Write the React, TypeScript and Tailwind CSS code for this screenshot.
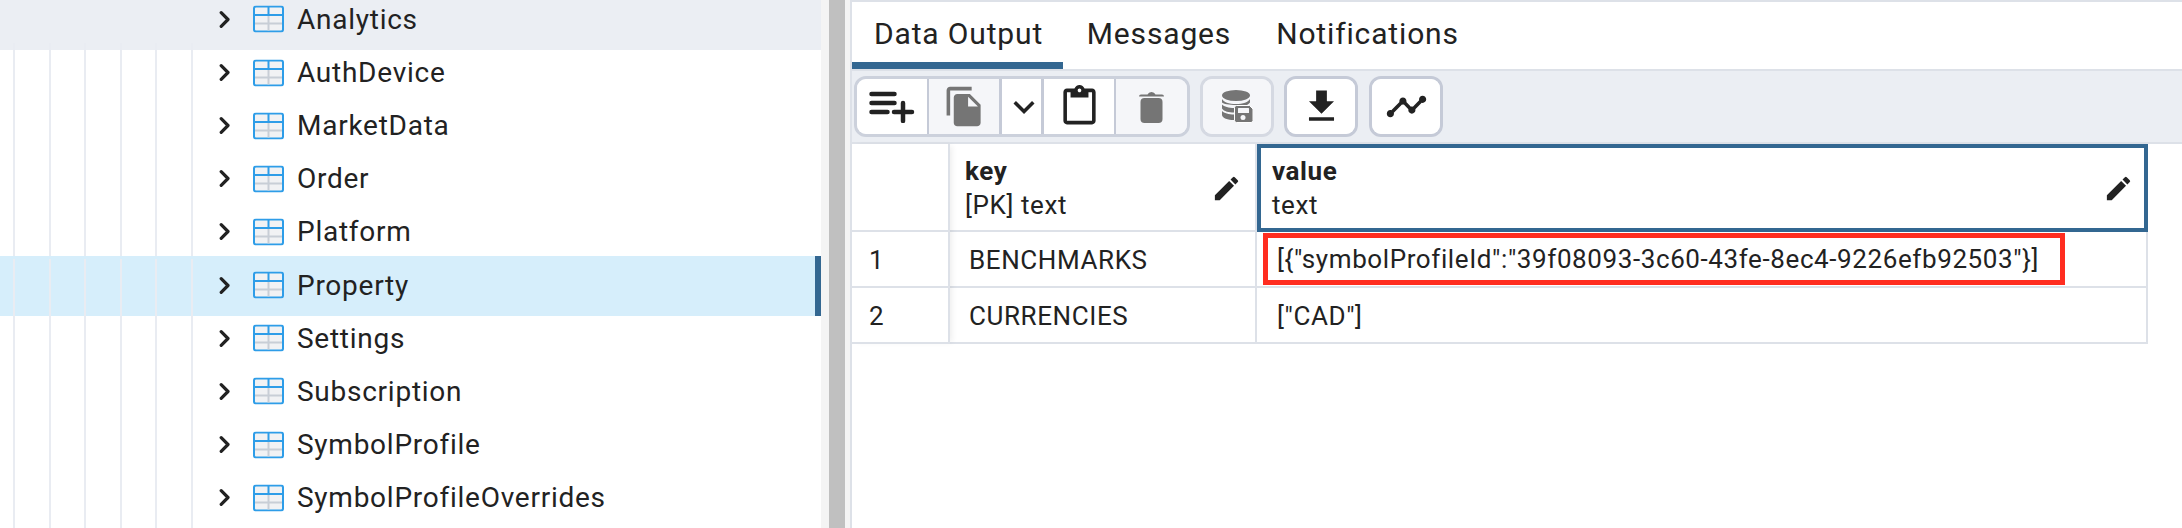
import { MdEdit, MdFileCopy, MdKeyboardArrowDown, MdContentPaste, MdFileDownload, MdTimeline } from "react-icons/md";
import type { ReactNode } from "react";

const tables = ["Analytics", "AuthDevice", "MarketData", "Order", "Platform", "Property", "Settings", "Subscription", "SymbolProfile", "SymbolProfileOverrides"];

function TableIcon() {
  return (
    <svg width="31" height="27" viewBox="0 0 31 27" className="shrink-0">
      <rect x="1" y="1" width="29" height="25" rx="2" fill="#f1f2f4" stroke="#2e9de8" strokeWidth="2" />
      <path d="M2 18h27M15.5 10v15" stroke="#c8ced6" strokeWidth="2" fill="none" />
      <path d="M1 9.500h29M15.500 1v9" stroke="#2e9de8" strokeWidth="2" fill="none" />
    </svg>
  );
}

function Chevron() {
  return (
    <svg width="12" height="18" viewBox="0 0 12 18" className="shrink-0">
      <path d="M2.200 2.200 9 9l-6.800 6.800" fill="none" stroke="#222" strokeWidth="3.200" strokeLinecap="round" strokeLinejoin="round" />
    </svg>
  );
}

function TreeRow({ name, index }: { name: string; index: number }) {
  const selected = name === "Property";
  const hover = index === 0;
  return (
    <div
      className={`relative flex items-center h-[60px] pl-[13px] ${index === 0 ? "-mt-[10px]" : "-mt-[6.670px]"} ${selected ? "bg-[#d6eefb] border-r-[6px] border-[#336791]" : ""} ${hover ? "bg-[#ebeef3]" : ""}`}
    >
      {[0, 1, 2, 3, 4, 5].map((g) => (
        <span
          key={g}
          className={`w-[2px] shrink-0 self-stretch ${g > 0 ? "ml-[33.600px]" : ""} ${hover ? "" : "bg-[#e9ecf2]"} ${selected ? "mt-[3px]" : ""}`}
        />
      ))}
      <span className="ml-[26px] flex -translate-y-[0.500px]"><Chevron /></span>
      <span className="ml-[22px] flex -translate-y-[0.500px]"><TableIcon /></span>
      <span className="ml-[13px] text-[28px] leading-[32px] text-[#222] tracking-[0.750px] -translate-y-[0.500px]">{name}</span>
    </div>
  );
}

function ToolBtn({ children, enabled, w = "w-[73px]", cls = "" }: { children: ReactNode; enabled?: boolean; w?: string; cls?: string }) {
  return (
    <div className={`${w} h-full flex items-center justify-center ${enabled ? "bg-white text-[#222]" : "bg-[#f5f6f9] text-[#757575]"} ${cls}`}>
      {children}
    </div>
  );
}

function AddRowIcon() {
  return (
    <svg width="46" height="32" viewBox="0 0 46 32" fill="none" stroke="#222" strokeWidth="4.500" strokeLinecap="round">
      <path d="M2.500 3h23M2.500 12h23M2.500 21h16M25 21h18M34 12v18" />
    </svg>
  );
}

function TrashIcon() {
  return (
    <svg width="25" height="32" viewBox="0 0 25 32" fill="#757575">
      <path d="M0 5.500Q0 3.500 2 3.500h6.500Q9.500 1 12.500 1t4 2.500H23q2 0 2 2z" />
      <rect x="1.500" y="7" width="22" height="25" rx="4" />
    </svg>
  );
}

function SaveDataIcon() {
  return (
    <svg width="31" height="33" viewBox="0 0 31 33" fill="#757575">
      <ellipse cx="14" cy="5.500" rx="14" ry="5.500" />
      <path d="M0 9c1.500 3 7 5 14 5s12.500-2 14-5v3.500c-1 1-2 2-3 2.500H14C7 15 1.500 14 0 12.500z" />
      <path d="M0 14.500c2 2 7 3.500 12 3.500v4.500c-5 0-10-1-12-4zM0 21c2 2 7 3.500 12 3.500V30C6 30 0 28 0 25z" />
      <path d="M14.500 15.500h13l3.500 3.500v11.500a2 2 0 0 1-2 2h-14.500a2 2 0 0 1-2-2v-13a2 2 0 0 1 2-2z" stroke="#fff" strokeWidth="1" />
      <rect x="16" y="18" width="11" height="5" rx="0.500" fill="#f5f6f9" />
      <circle cx="21" cy="27.500" r="2.500" fill="#f5f6f9" />
    </svg>
  );
}

function ColHeader({ name, type, active }: { name: string; type: string; active?: boolean }) {
  return (
    <div className={`flex items-center h-full ${active ? "border-4 border-[#336791] pl-[11px] pr-[10px]" : "border-r-2 border-b-2 border-[#dde1e8] pl-[15px] pr-[13px] pt-[2px]"}`}>
      <div className="flex-1 text-[26px] leading-[34px] text-[#222] tracking-[0.600px]">
        <div className="font-bold">{name}</div>
        <div>{type}</div>
      </div>
      <MdEdit size={31} color="#222" />
    </div>
  );
}

export default function App() {
  return (
    <div className="flex h-[528px] w-[2182px] overflow-hidden bg-white font-['Roboto',sans-serif]">
      <div className="w-[821px] shrink-0 flex flex-col">
        {tables.map((t, i) => (
          <TreeRow key={t} name={t} index={i} />
        ))}
      </div>

      <div className="w-[8px] shrink-0 bg-[#f4f4f4]" />
      <div className="w-[16px] shrink-0 bg-[#c0c0c0]" />
      <div className="w-[7px] shrink-0 bg-[#f4f4f4] border-r-2 border-[#dde1e8]" />

      <div className="flex-1 flex flex-col min-w-0">
        <div className="flex h-[69px] shrink-0 border-t-2 border-[#dde1e8] text-[30px] text-[#222] tracking-[0.850px]">
          <div className="w-[211px] flex items-center justify-center border-b-[7px] border-[#336791] pt-[2px] pl-[2px]">Data Output</div>
          <div className="w-[191px] flex items-center justify-center pb-[5px] pl-[1px]">Messages</div>
          <div className="w-[225px] flex items-center justify-center pb-[5px] pl-[2px]">Notifications</div>
        </div>

        <div className="flex items-center gap-[10px] h-[75px] shrink-0 pl-[2px] bg-[#ebeef3] border-t-2 border-b-2 border-[#dde1e8]">
          <div className="flex h-[61px] overflow-hidden rounded-[12px] border-[3px] border-[#ccd1dc]">
            <ToolBtn enabled w="w-[72px]" cls="border-r-2 border-[#c5cad7]"><AddRowIcon /></ToolBtn>
            <ToolBtn w="w-[73px]" cls="border-r-[3px] border-[#c5cad7] pl-[1px]"><MdFileCopy size={43} /></ToolBtn>
            <ToolBtn enabled w="w-[42px]" cls="border-r-[3px] border-[#c5cad7]"><MdKeyboardArrowDown size={42} className="shrink-0 translate-x-[2px]" /></ToolBtn>
            <ToolBtn enabled w="w-[72px]" cls="border-r-2 border-[#c5cad7]"><MdContentPaste size={43} /></ToolBtn>
            <ToolBtn w="w-[71px]"><TrashIcon /></ToolBtn>
          </div>
          <div className="h-[61px] w-[74px] overflow-hidden rounded-[12px] border-[3px] border-[#d5d9e2]">
            <ToolBtn w="w-full"><SaveDataIcon /></ToolBtn>
          </div>
          <div className="h-[61px] w-[74px] overflow-hidden rounded-[12px] border-[3px] border-[#c5cad7]">
            <ToolBtn enabled w="w-full"><MdFileDownload size={43} /></ToolBtn>
          </div>
          <div className="h-[61px] w-[74px] overflow-hidden rounded-[12px] border-[3px] border-[#c5cad7] ml-[1px]">
            <ToolBtn enabled w="w-full"><MdTimeline size={43} /></ToolBtn>
          </div>
        </div>

        <div className="flex w-[1296px] text-[26px] tracking-[0.600px] text-[#222]">
          <div className="w-[98px] shrink-0 shadow-[4px_0_6px_-2px_rgba(0,0,0,0.07)] z-10 relative">
            <div className="h-[88px] border-b-2 border-r-2 border-[#dde1e8]" />
            <div className="h-[56px] flex items-center pl-[17px] pt-[2px] border-b-2 border-r-2 border-[#dde1e8]">1</div>
            <div className="h-[56px] flex items-center pl-[17px] pt-[3px] border-b-2 border-r-2 border-[#dde1e8]">2</div>
          </div>
          <div className="w-[307px] shrink-0">
            <div className="h-[88px]"><ColHeader name="key" type="[PK] text" /></div>
            <div className="h-[56px] flex items-center pl-[19px] pt-[2px] border-b-2 border-r-2 border-[#dde1e8]">BENCHMARKS</div>
            <div className="h-[56px] flex items-center pl-[19px] pt-[3px] border-b-2 border-r-2 border-[#dde1e8]">CURRENCIES</div>
          </div>
          <div className="flex-1 min-w-0">
            <div className="h-[88px]"><ColHeader name="value" type="text" active /></div>
            <div className="h-[56px] border-b-2 border-r-2 border-[#dde1e8] pt-[1px] pl-[6px]">
              <div className="w-[802px] h-[52px] flex items-center pl-[9px] pt-[1px] border-[5px] border-[#ff2d20]">
                {'[{"symbolProfileId":"39f08093-3c60-43fe-8ec4-9226efb92503"}]'}
              </div>
            </div>
            <div className="h-[56px] flex items-center pl-[20px] pt-[3px] border-b-2 border-r-2 border-[#dde1e8]">{'["CAD"]'}</div>
          </div>
        </div>
      </div>
    </div>
  );
}
